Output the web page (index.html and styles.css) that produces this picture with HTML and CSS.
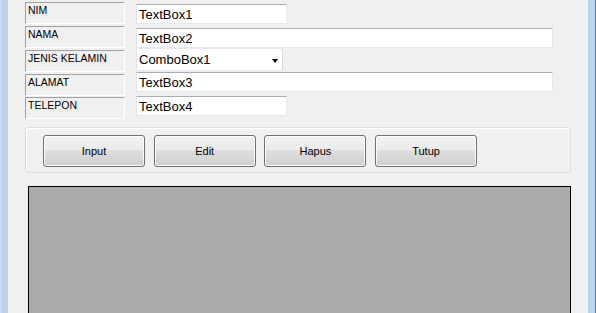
FILE: index.html
```html
<!DOCTYPE html>
<html>
<head>
<meta charset="utf-8">
<link rel="stylesheet" href="styles.css">
</head>
<body>
<div class="frame">
  <div class="edge edge-left"></div>
  <div class="client">
    <div class="fields">
      <div class="row r1">
        <div class="label">NIM</div>
        <div class="textbox short">TextBox1</div>
      </div>
      <div class="row r2">
        <div class="label">NAMA</div>
        <div class="textbox long">TextBox2</div>
      </div>
      <div class="row r3">
        <div class="label">JENIS KELAMIN</div>
        <div class="combo">ComboBox1<span class="arrow"></span></div>
      </div>
      <div class="row r4">
        <div class="label">ALAMAT</div>
        <div class="textbox long">TextBox3</div>
      </div>
      <div class="row r5">
        <div class="label">TELEPON</div>
        <div class="textbox short">TextBox4</div>
      </div>
    </div>
    <div class="panel">
      <button class="btn">Input</button>
      <button class="btn">Edit</button>
      <button class="btn">Hapus</button>
      <button class="btn">Tutup</button>
    </div>
    <div class="grid-area"></div>
  </div>
  <div class="edge edge-right"></div>
</div>
</body>
</html>
```
FILE: styles.css
```css
html, body {
  margin: 0;
  padding: 0;
  width: 596px;
  height: 313px;
  overflow: hidden;
  background: #f0f0f0;
  font-family: "Liberation Sans", Arial, sans-serif;
}

.frame {
  display: flex;
  width: 596px;
  height: 313px;
  overflow: hidden;
}

.edge {
  flex: 0 0 auto;
  height: 313px;
  box-sizing: border-box;
  background: #bad2ea;
}

.edge-left {
  width: 8px;
  border-left: 2px solid #c9dbee;
}

.edge-right {
  width: 8px;
  border-right: 1px solid #5d7fa3;
}

.client {
  flex: 0 0 580px;
  width: 580px;
  height: 313px;
  overflow: hidden;
  background: #f0f0f0;
  display: flex;
  flex-direction: column;
}

.client > * {
  flex-shrink: 0;
}

.fields {
  display: flex;
  flex-direction: column;
  padding-top: 2px;
  padding-left: 17px;
}

.row {
  display: flex;
  align-items: flex-start;
  gap: 11px;
  flex-shrink: 0;
}

.r1, .r2, .r3 { height: 24px; }
.r4 { height: 23px; }
.r5 { height: 22px; }

.label {
  width: 100px;
  height: 22px;
  box-sizing: border-box;
  border-style: solid;
  border-width: 1px;
  border-color: #a0a0a0 #ffffff #ffffff #a0a0a0;
  font-size: 10.5px;
  line-height: 12px;
  padding: 1px 0 0 2px;
  color: #000;
}

.textbox, .combo {
  box-sizing: border-box;
  height: 20px;
  background: #fff;
  border: 1px solid;
  border-color: #abadb3 #e3e9ef #e3e9ef #e2e3ea;
  font-size: 13px;
  line-height: 15px;
  padding: 2px 0 0 2px;
  color: #000;
}

.r1 .textbox, .r2 .textbox { margin-top: 2px; }
.r4 .textbox { margin-top: -2px; }
.r5 .textbox { margin-top: -1px; }

.short { width: 151px; }
.long { width: 417px; }

.combo {
  width: 147px;
  height: 23px;
  margin-top: -2px;
  padding-top: 3px;
  position: relative;
  border-color: #e3e9ef #d9d9d9 #e3e9ef #e2e3ea;
}

.arrow {
  position: absolute;
  left: 135px;
  top: 10px;
  width: 0;
  height: 0;
  border-left: 3.5px solid transparent;
  border-right: 3.5px solid transparent;
  border-top: 4px solid #000;
}

.panel {
  margin: 8px 0 0 17px;
  width: 546px;
  height: 46px;
  box-sizing: border-box;
  border: 1px solid #d5dfe5;
  border-radius: 3px;
  box-shadow: inset 1px 1px 0 #fff;
  display: flex;
  align-items: flex-start;
  gap: 8.7px;
  padding: 7px 0 0 17px;
}

.btn {
  width: 102px;
  height: 32px;
  box-sizing: border-box;
  border: 1px solid #707070;
  border-radius: 3px;
  background: linear-gradient(to bottom, #f2f2f2 0%, #ebebeb 45%, #dddddd 50%, #cfcfcf 100%);
  box-shadow: inset 0 0 0 1px #fcfcfc;
  font-family: "Liberation Sans", Arial, sans-serif;
  font-size: 11px;
  color: #000;
  padding: 0;
  margin: 0;
}

.grid-area {
  margin: 13px 0 0 20px;
  width: 543px;
  height: 130px;
  box-sizing: border-box;
  background: #ababab;
  border: 1px solid #000;
}
```
